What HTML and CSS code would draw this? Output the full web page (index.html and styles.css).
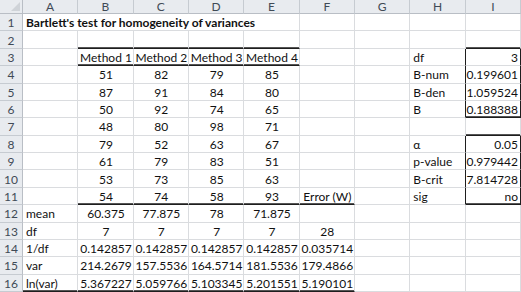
FILE: index.html
```html
<!DOCTYPE html>
<html>
<head>
<meta charset="utf-8">
<link rel="stylesheet" href="styles.css">
</head>
<body>
<div class="sheet">
  <div class="corner"><span class="tri"></span></div>
  <div class="hd">A</div><div class="hd">B</div><div class="hd">C</div><div class="hd">D</div><div class="hd">E</div><div class="hd">F</div><div class="hd">G</div><div class="hd">H</div><div class="hd">I</div>

  <div class="rh">1</div>
  <div class="c l title">Bartlett's test for homogeneity of variances</div>
  <div class="c"></div><div class="c"></div><div class="c"></div><div class="c"></div>

  <div class="rh">2</div>
  <div class="c"></div><div class="c bb"></div><div class="c bb"></div><div class="c bb"></div><div class="c bb"></div><div class="c"></div><div class="c"></div><div class="c"></div><div class="c bb"></div>

  <div class="rh">3</div>
  <div class="c"></div><div class="c bb">Method 1</div><div class="c bb">Method 2</div><div class="c bb">Method 3</div><div class="c bb">Method 4</div><div class="c"></div><div class="c"></div><div class="c l br">df</div><div class="c r br">3</div>

  <div class="rh">4</div>
  <div class="c"></div><div class="c">51</div><div class="c">82</div><div class="c">79</div><div class="c">85</div><div class="c"></div><div class="c"></div><div class="c l br">B-num</div><div class="c r br">0.199601</div>

  <div class="rh">5</div>
  <div class="c"></div><div class="c">87</div><div class="c">91</div><div class="c">84</div><div class="c">80</div><div class="c"></div><div class="c"></div><div class="c l br">B-den</div><div class="c r br">1.059524</div>

  <div class="rh">6</div>
  <div class="c"></div><div class="c">50</div><div class="c">92</div><div class="c">74</div><div class="c">65</div><div class="c"></div><div class="c"></div><div class="c l br">B</div><div class="c r br bb">0.188388</div>

  <div class="rh">7</div>
  <div class="c"></div><div class="c">48</div><div class="c">80</div><div class="c">98</div><div class="c">71</div><div class="c"></div><div class="c"></div><div class="c"></div><div class="c bb"></div>

  <div class="rh">8</div>
  <div class="c"></div><div class="c">79</div><div class="c">52</div><div class="c">63</div><div class="c">67</div><div class="c"></div><div class="c"></div><div class="c l br">α</div><div class="c r br">0.05</div>

  <div class="rh">9</div>
  <div class="c"></div><div class="c">61</div><div class="c">79</div><div class="c">83</div><div class="c">51</div><div class="c"></div><div class="c"></div><div class="c l br">p-value</div><div class="c r br">0.979442</div>

  <div class="rh">10</div>
  <div class="c"></div><div class="c">53</div><div class="c">73</div><div class="c">85</div><div class="c">63</div><div class="c"></div><div class="c"></div><div class="c l br">B-crit</div><div class="c r br">7.814728</div>

  <div class="rh">11</div>
  <div class="c"></div><div class="c bb">54</div><div class="c bb">74</div><div class="c bb">58</div><div class="c bb">93</div><div class="c bb">Error (W)</div><div class="c"></div><div class="c l br">sig</div><div class="c r br bb">no</div>

  <div class="rh">12</div>
  <div class="c l">mean</div><div class="c">60.375</div><div class="c">77.875</div><div class="c">78</div><div class="c">71.875</div><div class="c"></div><div class="c"></div><div class="c"></div><div class="c"></div>

  <div class="rh">13</div>
  <div class="c l">df</div><div class="c">7</div><div class="c">7</div><div class="c">7</div><div class="c">7</div><div class="c">28</div><div class="c"></div><div class="c"></div><div class="c"></div>

  <div class="rh">14</div>
  <div class="c l">1/df</div><div class="c">0.142857</div><div class="c">0.142857</div><div class="c">0.142857</div><div class="c">0.142857</div><div class="c">0.035714</div><div class="c"></div><div class="c"></div><div class="c"></div>

  <div class="rh">15</div>
  <div class="c l">var</div><div class="c">214.2679</div><div class="c">157.5536</div><div class="c">164.5714</div><div class="c">181.5536</div><div class="c">179.4866</div><div class="c"></div><div class="c"></div><div class="c"></div>

  <div class="rh">16</div>
  <div class="c l bb">ln(var)</div><div class="c bb">5.367227</div><div class="c bb">5.059766</div><div class="c bb">5.103345</div><div class="c bb">5.201551</div><div class="c bb">5.190101</div><div class="c"></div><div class="c"></div><div class="c"></div>
</div>
</body>
</html>
```
FILE: styles.css
```css
html, body {
  margin: 0;
  padding: 0;
  background: #ffffff;
}

.sheet {
  display: grid;
  grid-template-columns: 23px repeat(9, 1fr);
  grid-template-rows: 14px repeat(16, 1fr);
  width: 521px;
  height: 292px;
  font-family: Lato, "Open Sans", "Liberation Sans", sans-serif;
  font-size: 12px;
  color: #111;
  overflow: hidden;
}

.corner {
  position: relative;
  background: #e8ebef;
  border-right: 1px solid #b9bec5;
  border-bottom: 1px solid #b9bec5;
  box-sizing: border-box;
}

.tri {
  position: absolute;
  right: 2px;
  bottom: 2px;
  width: 0;
  height: 0;
  border-left: 9px solid transparent;
  border-bottom: 9px solid #cfd3d8;
}

.hd {
  display: flex;
  align-items: center;
  justify-content: center;
  background: #e8ebef;
  color: #3f4a56;
  border-right: 1px solid #c6cbd1;
  border-bottom: 1px solid #b9bec5;
  box-sizing: border-box;
  font-size: 12px;
  line-height: 1;
}

.rh {
  display: flex;
  align-items: center;
  justify-content: center;
  background: #e8ebef;
  color: #3f4a56;
  border-right: 1px solid #b9bec5;
  border-bottom: 1px solid #c6cbd1;
  box-sizing: border-box;
  font-size: 12px;
  padding-top: 1px;
}

.c {
  display: flex;
  align-items: center;
  justify-content: center;
  padding: 1px 2px 0 3px;
  box-sizing: border-box;
  border-right: 1px solid #dadcdf;
  border-bottom: 1px solid #dadcdf;
  white-space: nowrap;
  min-width: 0;
}

.l {
  justify-content: flex-start;
}

.r {
  justify-content: flex-end;
}

.title {
  grid-column: span 5;
  font-weight: bold;
  overflow: visible;
}

.bb {
  border-bottom: 1px solid #1e1e1e;
  box-shadow: inset 0 -1px 0 #555;
}

.br {
  border-right: 1px solid #1e1e1e;
}
```
